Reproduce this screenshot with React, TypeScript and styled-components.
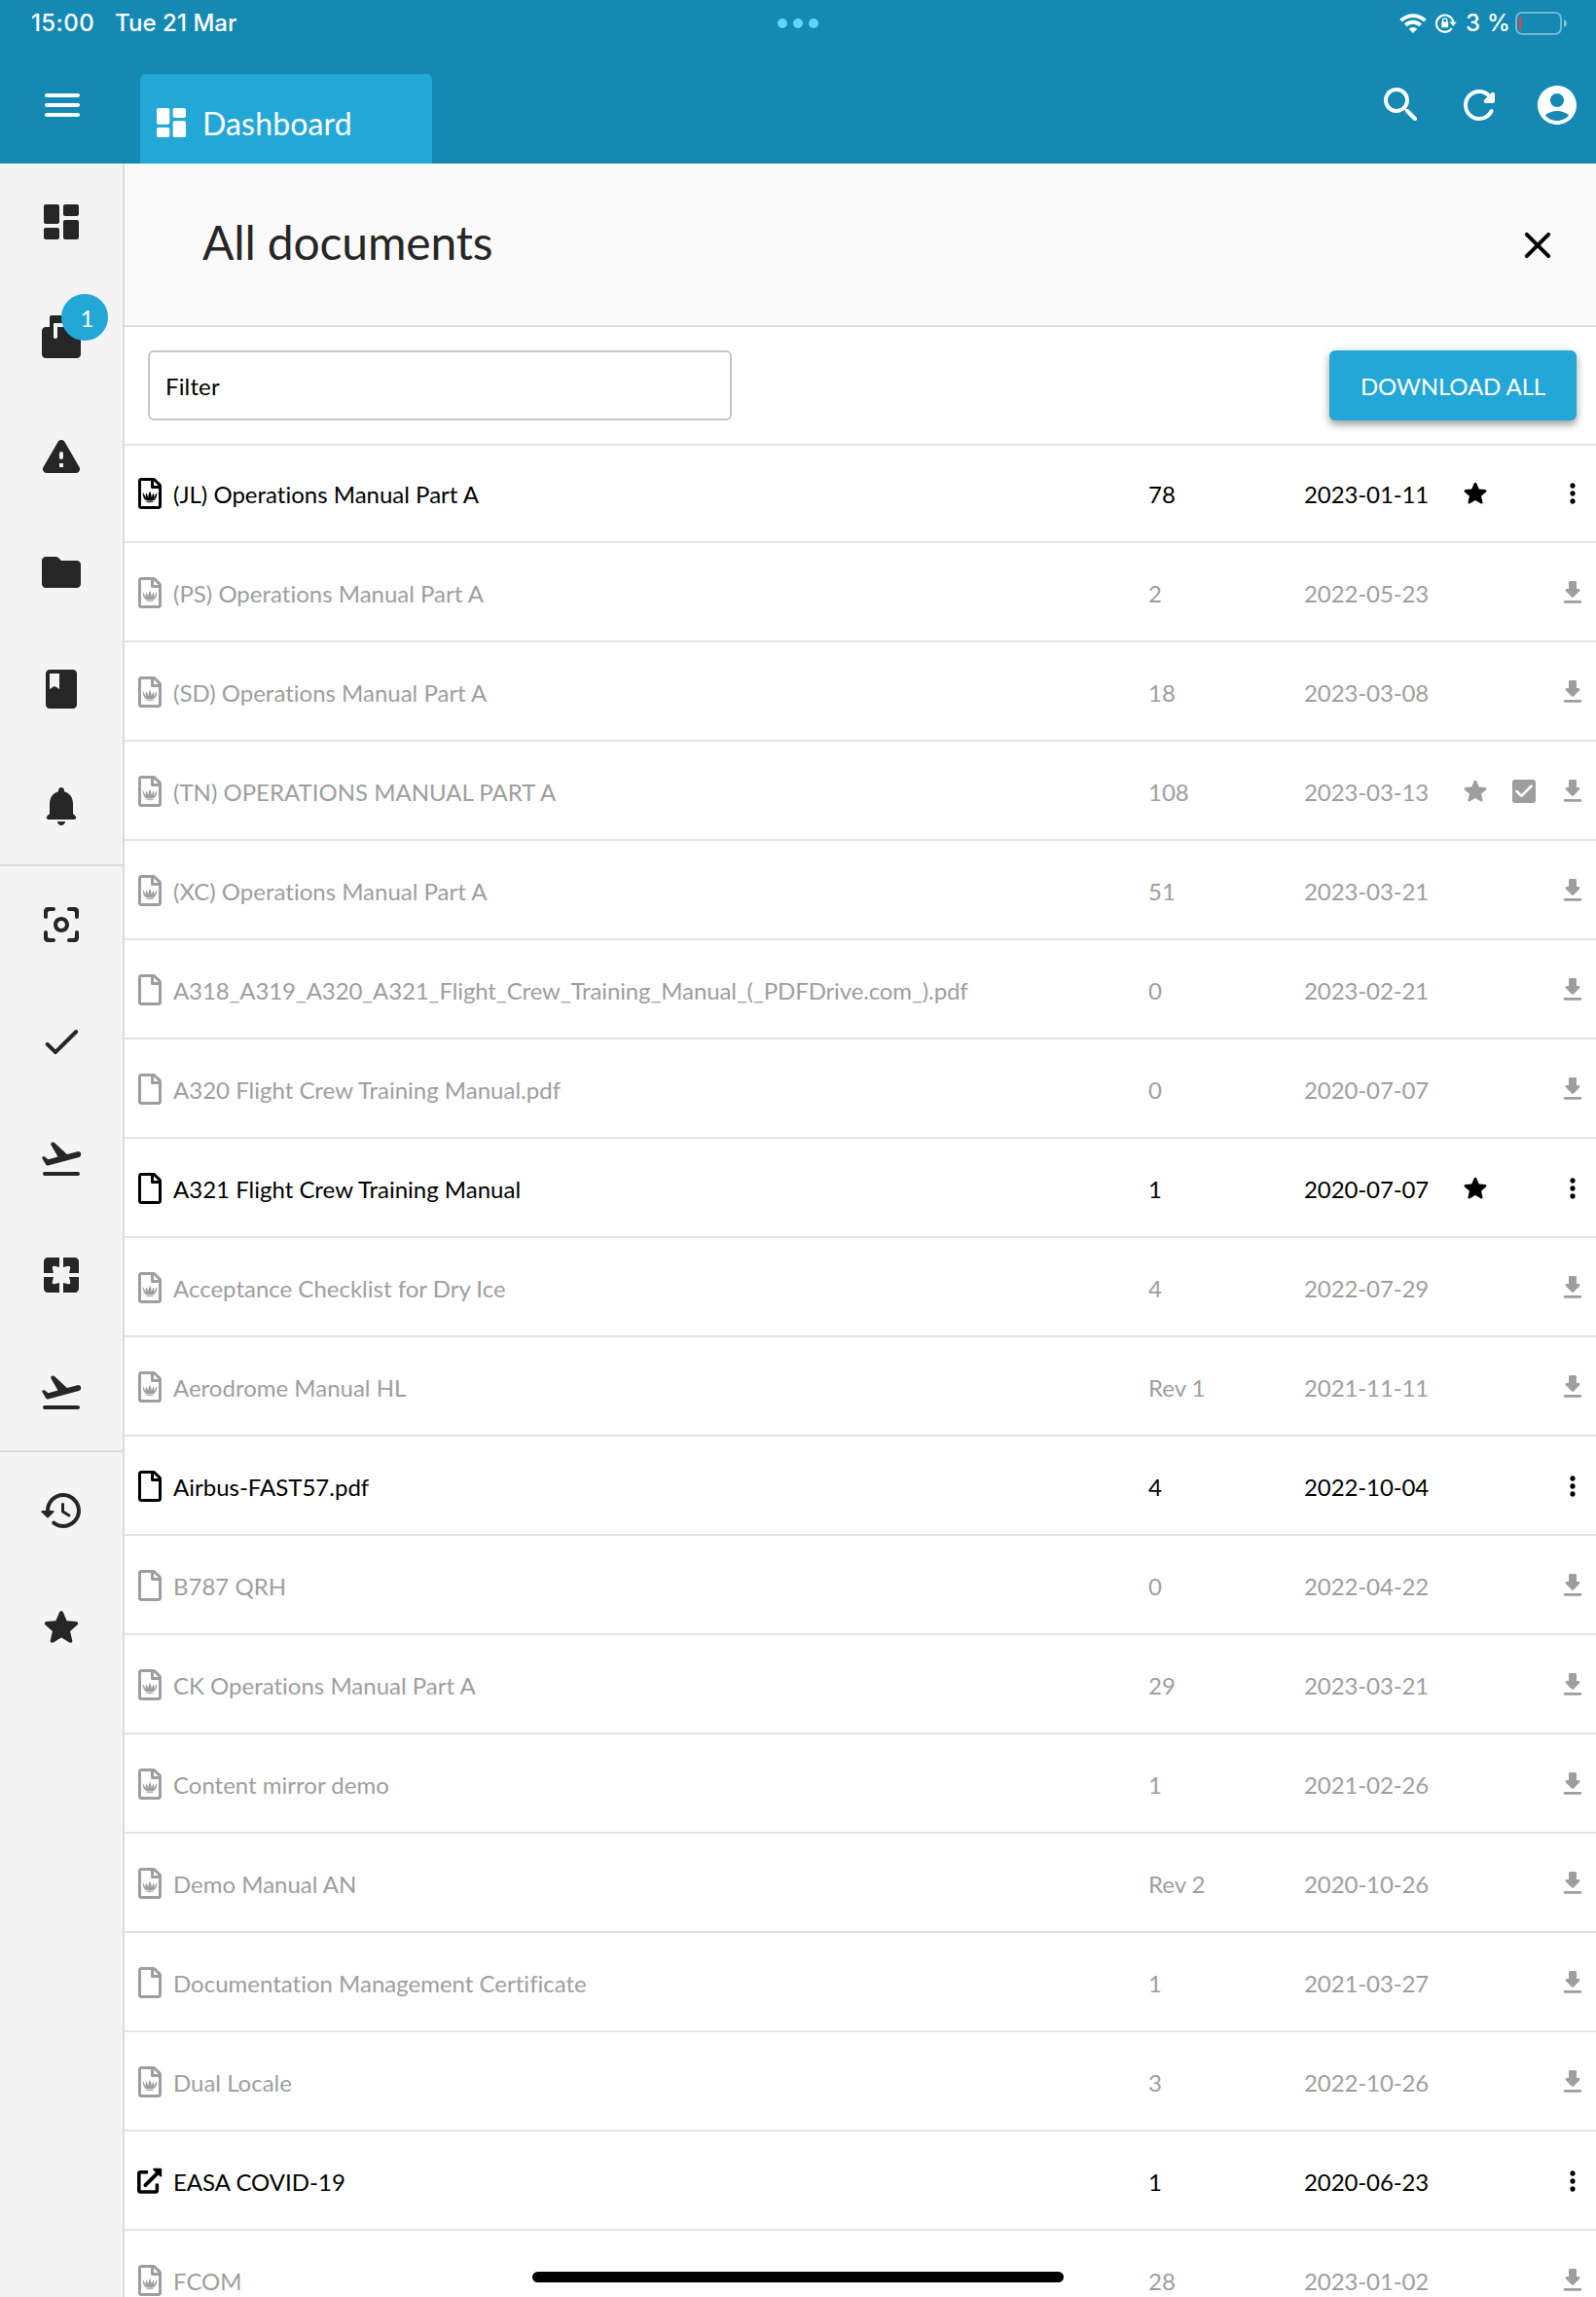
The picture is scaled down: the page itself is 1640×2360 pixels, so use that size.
import React from "react";
import styled, { createGlobalStyle } from "styled-components";

const Global = createGlobalStyle`
  * { box-sizing: border-box; }
  body { margin: 0; background: #fff; font-family: Lato, "Open Sans", sans-serif; font-variant-ligatures: none; }
  button { font: inherit; border: 0; background: none; padding: 0; color: inherit; }
`;

const paths = {
  dashboard: "M4 13h6c.55 0 1-.45 1-1V4c0-.55-.45-1-1-1H4c-.55 0-1 .45-1 1v8c0 .55.45 1 1 1zm0 8h6c.55 0 1-.45 1-1v-4c0-.55-.45-1-1-1H4c-.55 0-1 .45-1 1v4c0 .55.45 1 1 1zm10 0h6c.55 0 1-.45 1-1v-8c0-.55-.45-1-1-1h-6c-.55 0-1 .45-1 1v8c0 .55.45 1 1 1zM13 4v4c0 .55.45 1 1 1h6c.55 0 1-.45 1-1V4c0-.55-.45-1-1-1h-6c-.55 0-1 .45-1 1z",
  menu: "M4 18h16c.55 0 1-.45 1-1s-.45-1-1-1H4c-.55 0-1 .45-1 1s.45 1 1 1zm0-5h16c.55 0 1-.45 1-1s-.45-1-1-1H4c-.55 0-1 .45-1 1s.45 1 1 1zM3 7c0 .55.45 1 1 1h16c.55 0 1-.45 1-1s-.45-1-1-1H4c-.55 0-1 .45-1 1z",
  search: "M15.5 14h-.79l-.28-.27c1.2-1.4 1.82-3.31 1.48-5.34-.47-2.78-2.79-5-5.59-5.34-4.23-.52-7.79 3.04-7.27 7.27.34 2.8 2.56 5.12 5.34 5.59 2.03.34 3.94-.28 5.34-1.48l.27.28v.79l4.25 4.25c.41.41 1.08.41 1.49 0 .41-.41.41-1.08 0-1.49L15.5 14zm-6 0C7.01 14 5 11.99 5 9.5S7.01 5 9.5 5 14 7.01 14 9.5 11.99 14 9.5 14z",
  refresh: "M17.65 6.35c-1.63-1.63-3.94-2.57-6.48-2.31-3.67.37-6.69 3.35-7.1 7.02C3.52 15.91 7.27 20 12 20c3.19 0 5.93-1.87 7.21-4.56.32-.67-.16-1.44-.9-1.44-.37 0-.72.2-.88.53-1.13 2.43-3.84 3.97-6.8 3.31-2.22-.49-4.01-2.3-4.48-4.52C5.31 9.44 8.26 6 12 6c1.66 0 3.14.69 4.22 1.78l-1.51 1.51c-.63.63-.19 1.71.7 1.71H19c.55 0 1-.45 1-1V6.41c0-.89-1.08-1.34-1.71-.71l-.64.65z",
  account: "M12 2C6.48 2 2 6.48 2 12s4.48 10 10 10 10-4.48 10-10S17.52 2 12 2zm0 4c1.93 0 3.5 1.57 3.5 3.5S13.93 13 12 13s-3.5-1.57-3.5-3.5S10.07 6 12 6zm0 14c-2.03 0-4.43-.82-6.14-2.88C7.55 15.8 9.68 15 12 15s4.45.8 6.14 2.12C16.43 19.18 14.03 20 12 20z",
  mailbox: "M20 6H10v5c0 .55-.45 1-1 1s-1-.45-1-1V4h6V0H7c-.55 0-1 .45-1 1v5H4c-1.1 0-2 .9-2 2v12c0 1.1.9 2 2 2h16c1.1 0 2-.9 2-2V8c0-1.1-.9-2-2-2z",
  warning: "M4.47 21h15.06c1.54 0 2.5-1.67 1.73-3L13.73 4.99c-.77-1.33-2.69-1.33-3.46 0L2.74 18c-.77 1.33.19 3 1.73 3zM12 14c-.55 0-1-.45-1-1v-2c0-.55.45-1 1-1s1 .45 1 1v2c0 .55-.45 1-1 1zm1 4h-2v-2h2v2z",
  folder: "M10.59 4.59C10.21 4.21 9.7 4 9.17 4H4c-1.1 0-1.99.9-1.99 2L2 18c0 1.1.9 2 2 2h16c1.1 0 2-.9 2-2V8c0-1.1-.9-2-2-2h-8l-1.41-1.41z",
  book: "M18 2H6c-1.1 0-2 .9-2 2v16c0 1.1.9 2 2 2h12c1.1 0 2-.9 2-2V4c0-1.1-.9-2-2-2zM6 4h5v8l-2-1.2c-.31-.19-.69-.19-1 0L6 12V4z",
  bell: "M12 22c1.1 0 2-.9 2-2h-4c0 1.1.89 2 2 2zm6-6v-5c0-3.07-1.64-5.64-4.5-6.32V4c0-.83-.67-1.5-1.5-1.5s-1.5.67-1.5 1.5v.68C7.63 5.36 6 7.92 6 11v5l-1.29 1.29c-.63.63-.19 1.71.7 1.71h13.17c.89 0 1.34-1.08.71-1.71L18 16z",
  focus: "M4 15c-.55 0-1 .45-1 1v3c0 1.1.9 2 2 2h3c.55 0 1-.45 1-1s-.45-1-1-1H6c-.55 0-1-.45-1-1v-2c0-.55-.45-1-1-1zm1-9c0-.55.45-1 1-1h2c.55 0 1-.45 1-1s-.45-1-1-1H5c-1.1 0-2 .9-2 2v3c0 .55.45 1 1 1s1-.45 1-1V6zm14-3h-3c-.55 0-1 .45-1 1s.45 1 1 1h2c.55 0 1 .45 1 1v2c0 .55.45 1 1 1s1-.45 1-1V5c0-1.1-.9-2-2-2zm0 15c0 .55-.45 1-1 1h-2c-.55 0-1 .45-1 1s.45 1 1 1h3c1.1 0 2-.9 2-2v-3c0-.55-.45-1-1-1s-1 .45-1 1v2zM12 8c-2.21 0-4 1.79-4 4s1.79 4 4 4 4-1.79 4-4-1.79-4-4-4zm0 6c-1.1 0-2-.9-2-2s.9-2 2-2 2 .9 2 2-.9 2-2 2z",
  check: "M9 16.17L5.53 12.7c-.39-.39-1.02-.39-1.41 0-.39.39-.39 1.02 0 1.41l4.18 4.18c.39.39 1.02.39 1.41 0L20.29 7.71c.39-.39.39-1.02 0-1.41-.39-.39-1.02-.39-1.41 0L9 16.17z",
  takeoff: "M3.5 19h17c.55 0 1 .45 1 1s-.45 1-1 1h-17c-.55 0-1-.45-1-1s.45-1 1-1zm18.57-9.36c-.22-.8-1.04-1.27-1.84-1.06L14.92 10 8.46 3.98c-.27-.26-.66-.35-1.02-.25-.68.19-1 .97-.65 1.58l3.44 5.96-4.97 1.33-1.57-1.24c-.25-.19-.57-.26-.88-.18l-.33.09c-.32.08-.47.45-.3.73l1.88 3.25c.23.39.69.58 1.12.47L21 11.48c.8-.22 1.28-1.04 1.07-1.84z",
  pages: "M3 5v6h5l-.62-2.48c-.2-.79.4-1.34 1.14-1.14L11 8V3H5c-1.1 0-2 .9-2 2zm5 8H3v6c0 1.1.9 2 2 2h6v-5l-2.48.62c-.79.2-1.34-.4-1.14-1.14L8 13zm7.48 3.62L13 16v5h6c1.1 0 2-.9 2-2v-6h-5l.62 2.48c.2.79-.4 1.34-1.14 1.14zM19 3h-6v5l2.48-.62c.79-.2 1.34.4 1.14 1.14L16 11h5V5c0-1.1-.9-2-2-2z",
  history: "M13.26 3C8.17 2.86 4 6.95 4 12H2.21c-.45 0-.67.54-.35.85l2.79 2.8c.2.2.51.2.71 0l2.79-2.8c.31-.31.09-.85-.36-.85H6c0-3.9 3.18-7.05 7.1-7 3.72.05 6.85 3.18 6.9 6.9.05 3.91-3.1 7.1-7 7.1-1.61 0-3.1-.55-4.28-1.48-.4-.31-.96-.28-1.32.08-.42.42-.39 1.13.08 1.49C9 20.29 10.91 21 13 21c5.05 0 9.14-4.17 9-9.26-.13-4.69-4.05-8.61-8.74-8.74zm-.51 5c-.41 0-.75.34-.75.75v3.68c0 .35.19.68.49.86l3.12 1.85c.36.21.82.09 1.03-.26.21-.36.09-.82-.26-1.03l-2.88-1.71v-3.4c0-.4-.34-.74-.75-.74z",
  star: "M12 17.27l4.15 2.51c.76.46 1.69-.22 1.49-1.08l-1.1-4.72 3.67-3.18c.67-.58.31-1.68-.57-1.75l-4.83-.41-1.89-4.46c-.34-.81-1.5-.81-1.84 0L9.19 8.63l-4.83.41c-.88.07-1.24 1.17-.57 1.75l3.67 3.18-1.1 4.72c-.2.86.73 1.54 1.49 1.08l4.15-2.5z",
  more: "M12 8c1.1 0 2-.9 2-2s-.9-2-2-2-2 .9-2 2 .9 2 2 2zm0 2c-1.1 0-2 .9-2 2s.9 2 2 2 2-.9 2-2-.9-2-2-2zm0 6c-1.1 0-2 .9-2 2s.9 2 2 2 2-.9 2-2-.9-2-2-2z",
  download: "M16.59 9H15V4c0-.55-.45-1-1-1h-4c-.55 0-1 .45-1 1v5H7.41c-.89 0-1.34 1.08-.71 1.71l4.59 4.59c.39.39 1.02.39 1.41 0l4.59-4.59c.63-.63.19-1.71-.7-1.71zM5 19c0 .55.45 1 1 1h12c.55 0 1-.45 1-1s-.45-1-1-1H6c-.55 0-1 .45-1 1z",
  checkbox: "M19 3H5c-1.1 0-2 .9-2 2v14c0 1.1.9 2 2 2h14c1.1 0 2-.9 2-2V5c0-1.1-.9-2-2-2zm-8.29 13.29c-.39.39-1.02.39-1.41 0L5.71 12.7c-.39-.39-.39-1.02 0-1.41.39-.39 1.02-.39 1.41 0L10 14.17l6.88-6.88c.39-.39 1.02-.39 1.41 0 .39.39.39 1.02 0 1.41l-7.58 7.59z",
  close: "M18.3 5.71c-.39-.39-1.02-.39-1.41 0L12 10.59 7.11 5.7c-.39-.39-1.02-.39-1.41 0-.39.39-.39 1.02 0 1.41L10.59 12 5.7 16.89c-.39.39-.39 1.02 0 1.41.39.39 1.02.39 1.41 0L12 13.41l4.89 4.89c.39.39 1.02.39 1.41 0 .39-.39.39-1.02 0-1.41L13.41 12l4.89-4.89c.38-.38.38-1.02 0-1.4z",
};
type IconName = keyof typeof paths;

const Svg = styled.svg`
  display: block;
  flex: none;
  fill: currentColor;
`;

const Icon = ({ name, size = 48 }: { name: IconName; size?: number }) => (
  <Svg width={size} height={size} viewBox="0 0 24 24"><path d={paths[name]} /></Svg>
);

const Screen = styled.div`
  position: relative;
  width: 1640px;
  height: 2360px;
  overflow: hidden;
  display: flex;
  flex-direction: column;
  background: #fff;
`;

const TopBar = styled.header`
  flex: none;
  height: 168px;
  display: flex;
  flex-direction: column;
  background: #1389b3;
  color: #fff;
`;

const StatusBar = styled.div`
  height: 48px;
  flex: none;
  display: grid;
  grid-template-columns: 1fr auto 1fr;
  align-items: center;
  padding: 0 30px 0 32px;
  font: 500 24px/48px Inter, "Liberation Sans", sans-serif;
`;
const StatusLeft = styled.div`
  display: flex;
  gap: 21px;
  letter-spacing: 0.4px;
`;
const StatusDate = styled.span`
  letter-spacing: 0.05px;
`;
const Dots = styled.div`
  display: flex;
  gap: 6px;
  margin: 0 1px 0 -1px;
`;
const Dot = styled.i`
  width: 10px;
  height: 10px;
  border-radius: 50%;
  background: #64d2ff;
`;
const StatusRight = styled.div`
  display: flex;
  justify-content: flex-end;
  align-items: center;
`;
const LockSlot = styled.span`
  margin: 0 9px;
`;
const Percent = styled.span`
  margin-right: 5px;
  letter-spacing: 0.2px;
`;

const Nav = styled.div`
  height: 120px;
  display: flex;
  align-items: center;
  padding: 0 16px 0 40px;
`;
const Tab = styled.div`
  align-self: flex-end;
  width: 300px;
  height: 92px;
  margin-left: 56px;
  padding: 8px 12px 0;
  display: flex;
  align-items: center;
  gap: 12px;
  border-radius: 6px 6px 0 0;
  background: #23a7d7;
  font-size: 32px;
`;
const TabLabel = styled.span`
  padding-top: 1px;
  letter-spacing: 0.15px;
`;
const NavActions = styled.div`
  margin-left: auto;
  display: flex;
  gap: 32px;
`;

const Body = styled.div`
  flex: 1;
  min-height: 0;
  display: flex;
`;
const Sidebar = styled.nav`
  flex: none;
  width: 128px;
  border-right: 2px solid #dbdbdb;
  background: #f4f4f4;
  color: #262626;
`;
const SideGroup = styled.div`
  & + & { border-top: 2px solid #dbdbdb; }
`;
const SideItem = styled.div`
  position: relative;
  height: 120px;
  display: flex;
  align-items: center;
  justify-content: center;
`;
const Badge = styled.span`
  position: absolute;
  left: 63px;
  top: 14px;
  width: 48px;
  height: 48px;
  padding-left: 5px;
  border-radius: 50%;
  background: #23a7d7;
  color: #fff;
  font-size: 24px;
  line-height: 50px;
  text-align: center;
`;

const Main = styled.main`
  flex: 1;
  min-width: 0;
`;
const Heading = styled.div`
  height: 168px;
  padding: 2px 36px 0 80px;
  display: flex;
  align-items: center;
  justify-content: space-between;
  border-bottom: 2px solid #dfdfdf;
  background: #fafafa;
`;
const Title = styled.h1`
  margin: 0;
  padding-bottom: 7px;
  font-size: 48px;
  font-weight: 400;
  line-height: 60px;
  letter-spacing: -0.15px;
  color: #262626;
`;
const FilterBar = styled.div`
  position: relative;
  height: 122px;
  margin-bottom: -2px;
  padding: 0 20px 0 24px;
  display: flex;
  align-items: center;
  justify-content: space-between;
  border-bottom: 2px solid #e3e3e3;
`;
const FilterField = styled.div`
  width: 600px;
  height: 72px;
  padding: 0 16px;
  display: flex;
  align-items: center;
  border: 2px solid #c6c6c6;
  border-radius: 6px;
  font-size: 24px;
  letter-spacing: 0.15px;
`;
const DownloadAll = styled.button`
  width: 254px;
  height: 72px;
  border-radius: 6px;
  background: #23a7d7;
  color: #fff;
  font-size: 24px;
  letter-spacing: -0.1px;
  box-shadow: 0 4px 8px rgba(0, 0, 0, 0.4);
`;

const Row = styled.div<{ $on?: boolean }>`
  height: 102px;
  display: grid;
  grid-template-columns: 36px 1fr 160px 152px 148px;
  align-items: center;
  padding: 2px 0 0 14px;
  border-bottom: 2px solid #e3e3e3;
  color: ${(p) => (p.$on ? "#000" : "#9e9e9e")};
  font-size: 24px;
`;
const Cell = styled.span<{ $tracking?: number }>`
  white-space: nowrap;
  letter-spacing: ${(p) => p.$tracking ?? 0}px;
`;
const Actions = styled.div`
  display: grid;
  grid-template-columns: repeat(3, 48px);
  column-gap: 2px;
  justify-items: center;
`;
const Slot = styled.span`
  height: 32px;
`;

const HomeIndicator = styled.div`
  position: absolute;
  left: 547px;
  bottom: 15px;
  width: 546px;
  height: 11px;
  border-radius: 6px;
  background: #000;
`;

const FileIcon = ({ crown }: { crown?: boolean }) => (
  <Svg width="24" height="32" viewBox="0 0 24 32">
    <path transform="scale(.0625)" d="M369.9 97.9L286 14C277 5 264.8 0 252.1 0H48C21.5 0 0 21.5 0 48v416c0 26.5 21.5 48 48 48h288c26.5 0 48-21.5 48-48V131.9c0-12.7-5.1-25-14.1-34zM332.1 128H256V51.9l76.1 76.1zM48 464V48h160v104c0 13.300 10.700 24 24 24h104v288H48z" />
    {crown && (
      <>
        <path d="M4.600 15C4.800 19 5.800 21.800 8 23Q12 24.200 16 23C18.200 21.800 19.200 19 19.400 15Q17.200 17 16.500 20.800Q16.500 18 15.900 15.600Q14.200 17.500 13.900 20.600Q13.500 16.500 12 13.500Q10.500 16.500 10.100 20.600Q9.800 17.500 8.100 15.600Q7.500 18 7.500 20.800Q6.800 17 4.600 15Z" />
        <path d="M7 23.700Q12 25 17 23.700Q14.800 25.300 12 25.300Q9.200 25.300 7 23.700Z" />
      </>
    )}
  </Svg>
);

const LinkSvg = styled(Svg)`
  margin-left: -1px;
`;
const LinkIcon = () => (
  <LinkSvg width="26" height="28" viewBox="0 0 26 28">
    <path d="M11 4.700H3.200Q1.800 4.700 1.800 6.100V23.600Q1.800 25 3.200 25H19Q20.400 25 20.400 23.600V16.500" fill="none" stroke="currentColor" strokeWidth="3.500" />
    <path d="M8.400 18.200 21 5.600" fill="none" stroke="currentColor" strokeWidth="3.800" strokeLinecap="round" />
    <path d="M17 .7h7.200q1 0 1 1v7.200q-.6 1.200-1.600.4L16.400 2.400q-.8-1.200.6-1.700z" />
  </LinkSvg>
);

type Doc = { kind: "crown" | "file" | "link"; name: string; rev: string; date: string; on?: boolean; star?: boolean; checked?: boolean };
const docs: Doc[] = [
  { kind: "crown", name: "(JL) Operations Manual Part A", rev: "78", date: "2023-01-11", on: true, star: true },
  { kind: "crown", name: "(PS) Operations Manual Part A", rev: "2", date: "2022-05-23" },
  { kind: "crown", name: "(SD) Operations Manual Part A", rev: "18", date: "2023-03-08" },
  { kind: "crown", name: "(TN) OPERATIONS MANUAL PART A", rev: "108", date: "2023-03-13", star: true, checked: true },
  { kind: "crown", name: "(XC) Operations Manual Part A", rev: "51", date: "2023-03-21" },
  { kind: "file", name: "A318_A319_A320_A321_Flight_Crew_Training_Manual_(_PDFDrive.com_).pdf", rev: "0", date: "2023-02-21" },
  { kind: "file", name: "A320 Flight Crew Training Manual.pdf", rev: "0", date: "2020-07-07" },
  { kind: "file", name: "A321 Flight Crew Training Manual", rev: "1", date: "2020-07-07", on: true, star: true },
  { kind: "crown", name: "Acceptance Checklist for Dry Ice", rev: "4", date: "2022-07-29" },
  { kind: "crown", name: "Aerodrome Manual HL", rev: "Rev 1", date: "2021-11-11" },
  { kind: "file", name: "Airbus-FAST57.pdf", rev: "4", date: "2022-10-04", on: true },
  { kind: "file", name: "B787 QRH", rev: "0", date: "2022-04-22" },
  { kind: "crown", name: "CK Operations Manual Part A", rev: "29", date: "2023-03-21" },
  { kind: "crown", name: "Content mirror demo", rev: "1", date: "2021-02-26" },
  { kind: "crown", name: "Demo Manual AN", rev: "Rev 2", date: "2020-10-26" },
  { kind: "file", name: "Documentation Management Certificate", rev: "1", date: "2021-03-27" },
  { kind: "crown", name: "Dual Locale", rev: "3", date: "2022-10-26" },
  { kind: "link", name: "EASA COVID-19", rev: "1", date: "2020-06-23", on: true },
  { kind: "crown", name: "FCOM", rev: "28", date: "2023-01-02" },
];

const sideGroups: IconName[][] = [
  ["dashboard", "mailbox", "warning", "folder", "book", "bell"],
  ["focus", "check", "takeoff", "pages", "takeoff"],
  ["history", "star"],
];

const Wifi = () => (
  <Svg width="28" height="20" viewBox="0 0 28 20">
    <g fill="none" stroke="#fff" strokeWidth="3.800">
      <path d="M1.600 7.200a17.500 17.500 0 0 1 24.800 0" />
      <path d="M6.300 11.900a11 11 0 0 1 15.400 0" />
    </g>
    <path d="M14 20l-4.300-4.300a6.200 6.200 0 0 1 8.600 0z" />
  </Svg>
);
const RotationLock = () => (
  <Svg width="22" height="20" viewBox="0 0 22 20">
    <path d="M16.800 15.200A8.700 8.700 0 1 1 18.300 9" fill="none" stroke="#fff" strokeWidth="2.100" />
    <path d="M14.600 8.400h7.200L18.300 13z" />
    <path d="M6.300 8.500h6.900v5.700H6.300z" />
    <path d="M7.600 9V7a2.100 2.100 0 0 1 4.200 0v2" fill="none" stroke="#fff" strokeWidth="1.400" />
  </Svg>
);
const Battery = () => (
  <Svg width="53" height="24" viewBox="0 0 53 24">
    <rect x="1" y="1" width="46" height="22" rx="6" fill="none" stroke="#fff" strokeOpacity=".4" strokeWidth="2" />
    <path d="M50 8c4 1.500 4 6.500 0 8z" fillOpacity=".5" />
    <rect x="4" y="5" width="2.200" height="14" rx="1" fill="#ff3b30" />
  </Svg>
);

export default function App() {
  return (
    <Screen>
      <Global />
      <TopBar>
        <StatusBar>
          <StatusLeft><span>15:00</span><StatusDate>Tue 21 Mar</StatusDate></StatusLeft>
          <Dots><Dot /><Dot /><Dot /></Dots>
          <StatusRight><Wifi /><LockSlot><RotationLock /></LockSlot><Percent>3 %</Percent><Battery /></StatusRight>
        </StatusBar>
        <Nav>
          <Icon name="menu" />
          <Tab><Icon name="dashboard" size={40} /><TabLabel>Dashboard</TabLabel></Tab>
          <NavActions><Icon name="search" /><Icon name="refresh" /><Icon name="account" /></NavActions>
        </Nav>
      </TopBar>
      <Body>
        <Sidebar>
          {sideGroups.map((group, g) => (
            <SideGroup key={g}>
              {group.map((name, i) => (
                <SideItem key={i}><Icon name={name} />{name === "mailbox" && <Badge>1</Badge>}</SideItem>
              ))}
            </SideGroup>
          ))}
        </Sidebar>
        <Main>
          <Heading><Title>All documents</Title><Icon name="close" /></Heading>
          <FilterBar><FilterField>Filter</FilterField><DownloadAll>DOWNLOAD ALL</DownloadAll></FilterBar>
          {docs.map((d) => (
            <Row key={d.name} $on={d.on}>
              {d.kind === "link" ? <LinkIcon /> : <FileIcon crown={d.kind === "crown"} />}
              <Cell $tracking={d.name.includes("_") ? -0.13 : 0}>{d.name}</Cell>
              <Cell>{d.rev}</Cell>
              <Cell $tracking={-0.1}>{d.date}</Cell>
              <Actions>
                <Slot>{d.star && <Icon name="star" size={32} />}</Slot>
                <Slot>{d.checked && <Icon name="checkbox" size={32} />}</Slot>
                <Slot><Icon name={d.on ? "more" : "download"} size={32} /></Slot>
              </Actions>
            </Row>
          ))}
        </Main>
      </Body>
      <HomeIndicator />
    </Screen>
  );
}
